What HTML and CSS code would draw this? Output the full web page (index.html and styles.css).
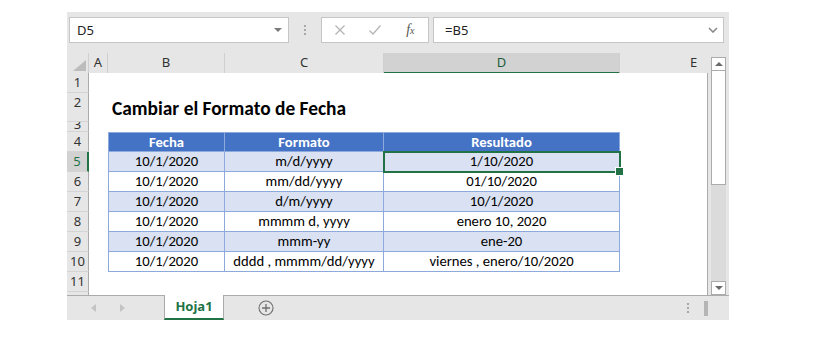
FILE: index.html
```html
<!DOCTYPE html>
<html lang="es">
<head>
  <meta charset="UTF-8">
  <title>Cambiar el Formato de Fecha</title>
  <link rel="stylesheet" href="styles.css">
</head>
<body>

<div class="excel">
  <!-- Formula bar -->
  <div class="formula-bar">
    <div class="name-box"><span>D5</span><span class="caret"></span></div>
    <div class="grip"><span></span><span></span><span></span></div>
    <div class="fx-buttons">
      <span class="fx-btn">
        <svg width="12" height="12" viewBox="0 0 12 12"><path d="M1.5 1.5 L10.5 10.5 M10.5 1.5 L1.5 10.5" stroke="#b4b4b4" stroke-width="1.3" fill="none"/></svg>
      </span>
      <span class="fx-btn">
        <svg width="14" height="12" viewBox="0 0 14 12"><path d="M1.5 6.5 L5 10 L12.5 1.5" stroke="#b4b4b4" stroke-width="1.3" fill="none"/></svg>
      </span>
      <span class="fx-btn fx-text"><i>f</i><sub>x</sub></span>
    </div>
    <div class="formula-input">
      <span>=B5</span>
      <svg width="10" height="6" viewBox="0 0 10 6"><path d="M1 1 L5 5 L9 1" stroke="#8a8a8a" stroke-width="1.6" fill="none"/></svg>
    </div>
  </div>

  <!-- Grid + scrollbar -->
  <div class="main">
    <div class="sheet">
      <div class="row head">
        <div class="corner">
          <svg width="14" height="11" viewBox="0 0 14 11"><polygon points="13,0 13,11 0,11" fill="#bcbcbc"/></svg>
        </div>
        <div class="ch">A</div>
        <div class="ch">B</div>
        <div class="ch">C</div>
        <div class="ch active">D</div>
        <div class="ch">E</div>
      </div>

      <div class="rows">
        <div class="row"><div class="rh">1</div></div>
        <div class="row tall">
          <div class="rh">2</div>
          <div></div>
          <div class="title">Cambiar el Formato de Fecha</div>
        </div>
        <div class="row short"><div class="rh">3</div></div>

        <div class="row">
          <div class="rh">4</div><div></div>
          <div class="cell th first">Fecha</div>
          <div class="cell th">Formato</div>
          <div class="cell th">Resultado</div>
        </div>
        <div class="row band">
          <div class="rh active">5</div><div></div>
          <div class="cell first">10/1/2020</div>
          <div class="cell">m/d/yyyy</div>
          <div class="cell sel">1/10/2020</div>
        </div>
        <div class="row">
          <div class="rh">6</div><div></div>
          <div class="cell first">10/1/2020</div>
          <div class="cell">mm/dd/yyyy</div>
          <div class="cell">01/10/2020</div>
        </div>
        <div class="row band">
          <div class="rh">7</div><div></div>
          <div class="cell first">10/1/2020</div>
          <div class="cell">d/m/yyyy</div>
          <div class="cell">10/1/2020</div>
        </div>
        <div class="row">
          <div class="rh">8</div><div></div>
          <div class="cell first">10/1/2020</div>
          <div class="cell">mmmm d, yyyy</div>
          <div class="cell">enero 10, 2020</div>
        </div>
        <div class="row band">
          <div class="rh">9</div><div></div>
          <div class="cell first">10/1/2020</div>
          <div class="cell">mmm-yy</div>
          <div class="cell">ene-20</div>
        </div>
        <div class="row">
          <div class="rh">10</div><div></div>
          <div class="cell first">10/1/2020</div>
          <div class="cell">dddd , mmmm/dd/yyyy</div>
          <div class="cell">viernes , enero/10/2020</div>
        </div>
        <div class="row"><div class="rh">11</div></div>
        <div class="row"><div class="rh"></div></div>
      </div>
    </div>

    <div class="vscroll">
      <div class="arrow-box"><span class="tri up"></span></div>
      <div class="thumb"></div>
      <div class="track"></div>
      <div class="arrow-box"><span class="tri down"></span></div>
    </div>
  </div>

  <!-- Sheet tabs -->
  <div class="tabs">
    <div class="tab-nav">
      <span class="tri left"></span>
      <span class="tri right"></span>
    </div>
    <div class="tab">Hoja1</div>
    <div class="tab-rest">
      <svg class="add" width="16" height="16" viewBox="0 0 16 16">
        <circle cx="8" cy="8" r="7" stroke="#6f6f6f" stroke-width="1.1" fill="none"/>
        <path d="M8 4 V12 M4 8 H12" stroke="#6f6f6f" stroke-width="1.3"/>
      </svg>
      <div class="hsplit">
        <div class="dots"><span></span><span></span><span></span></div>
        <div class="bar"></div>
      </div>
    </div>
  </div>
</div>

</body>
</html>
```

FILE: styles.css
```css
/* General */
* {
  margin: 0;
  padding: 0;
  box-sizing: border-box;
}

body {
  background-color: #fff;
  font-family: "Noto Sans", "Open Sans", sans-serif;
  color: #222;
}

.excel {
  width: 662px;
  height: 308px;
  margin: 12px 0 0 67px;
  background-color: #e6e6e6;
}

/* Formula bar */
.formula-bar {
  height: 41px;
  display: flex;
  align-items: flex-start;
  padding: 5px 5px 0 2px;
}

.name-box {
  width: 220px;
  height: 26px;
  background-color: #fff;
  border: 1px solid #c6c6c6;
  display: flex;
  align-items: center;
  justify-content: space-between;
  padding: 0 6px 0 7px;
  font-size: 13px;
}

.caret {
  border-left: 4px solid transparent;
  border-right: 4px solid transparent;
  border-top: 4px solid #7a7a7a;
}

.grip {
  width: 32px;
  height: 26px;
  display: flex;
  flex-direction: column;
  align-items: center;
  gap: 2px;
  padding-top: 8px;
}

.grip span {
  width: 2px;
  height: 2px;
  background-color: #a8a8a8;
}

.fx-buttons {
  width: 108px;
  height: 26px;
  background-color: #fff;
  border: 1px solid #c6c6c6;
  display: flex;
  align-items: center;
}

.fx-btn {
  width: 36px;
  display: flex;
  justify-content: center;
  align-items: center;
}

.fx-text {
  font-family: "Liberation Serif", serif;
  font-size: 14px;
  color: #555;
}

.fx-text sub {
  font-size: 10px;
  font-style: italic;
}

.formula-input {
  flex: 1;
  height: 26px;
  margin-left: 4px;
  background-color: #fff;
  border: 1px solid #c6c6c6;
  display: flex;
  align-items: center;
  justify-content: space-between;
  padding: 0 5px 0 11px;
  font-size: 13px;
}

/* Grid */
.main {
  display: grid;
  grid-template-columns: 641px 21px;
  height: 242px;
}

.sheet {
  display: flex;
  flex-direction: column;
  overflow: hidden;
}

.row {
  display: grid;
  grid-template-columns: 22px 19px 117px 159px 236px 148px;
  height: 20px;
  flex-shrink: 0;
}

.row.tall {
  height: 29px;
}

.row.short {
  height: 10px;
}

.rows {
  flex: 1;
  overflow: hidden;
  background-color: #fff;
  border-right: 1px solid #ababab;
}

.head > div {
  background-color: #e6e6e6;
  border-bottom: 1px solid #ababab;
  border-right: 1px solid #cfcfcf;
}

.corner {
  display: flex;
  align-items: flex-end;
  justify-content: flex-end;
  padding: 0 1px 2px 0;
}

.ch {
  font-size: 13px;
  color: #333;
  text-align: center;
  line-height: 19px;
}

.ch.active {
  background-color: #d2d2d2 !important;
  border-bottom: 2px solid #217346 !important;
  color: #1f5c3a;
}

.rh {
  background-color: #e6e6e6;
  border-right: 1px solid #ababab;
  border-bottom: 1px solid #d4d4d4;
  font-size: 13px;
  color: #333;
  text-align: center;
  line-height: 19px;
  overflow: hidden;
}

.short .rh {
  line-height: 4px;
}

.rh.active {
  background-color: #d2d2d2;
  border-right: 2px solid #217346;
  color: #217346;
}

.title {
  grid-column: 3 / 6;
  font-family: "Carlito", "Lato", sans-serif;
  font-weight: bold;
  font-size: 19.4px;
  color: #000;
  padding: 4px 0 0 4px;
  white-space: nowrap;
}

/* Data table */
.cell {
  font-family: "Carlito", "Lato", sans-serif;
  font-size: 14.67px;
  color: #000;
  text-align: center;
  line-height: 19px;
  white-space: nowrap;
  border-right: 1px solid #8ea9db;
  border-bottom: 1px solid #8ea9db;
}

.cell.first {
  border-left: 1px solid #8ea9db;
}

.band .cell {
  background-color: #d9e1f2;
}

.cell.th {
  background-color: #4472c4;
  color: #fff;
  font-weight: bold;
  border-top: 1px solid #8ea9db;
  line-height: 18px;
}

.cell.sel {
  position: relative;
  outline: 2px solid #217346;
  outline-offset: -1px;
  z-index: 1;
}

.cell.sel::after {
  content: "";
  position: absolute;
  right: -5px;
  bottom: -5px;
  width: 7px;
  height: 7px;
  background-color: #217346;
  border: 1px solid #fff;
}

/* Vertical scrollbar */
.vscroll {
  display: flex;
  flex-direction: column;
  padding: 4px 3px 0;
}

.arrow-box {
  height: 14px;
  background-color: #fff;
  border: 1px solid #ababab;
  display: flex;
  align-items: center;
  justify-content: center;
}

.thumb {
  height: 114px;
  background-color: #fff;
  border: 1px solid #ababab;
  border-top: none;
}

.track {
  flex: 1;
  background-color: #dbdbdb;
}

.tri {
  width: 0;
  height: 0;
}

.tri.up {
  border-left: 4px solid transparent;
  border-right: 4px solid transparent;
  border-bottom: 4px solid #6a6a6a;
}

.tri.down {
  border-left: 4px solid transparent;
  border-right: 4px solid transparent;
  border-top: 4px solid #6a6a6a;
}

.tri.left {
  border-top: 4px solid transparent;
  border-bottom: 4px solid transparent;
  border-right: 5px solid #c4c4c4;
}

.tri.right {
  border-top: 4px solid transparent;
  border-bottom: 4px solid transparent;
  border-left: 5px solid #c4c4c4;
}

/* Sheet tabs */
.tabs {
  height: 25px;
  display: flex;
}

.tab-nav {
  width: 97px;
  border-top: 1px solid #ababab;
  display: flex;
  align-items: center;
  gap: 24px;
  padding-left: 24px;
}

.tab {
  width: 60px;
  background-color: #fff;
  border-left: 1px solid #ababab;
  border-right: 1px solid #ababab;
  border-bottom: 2px solid #217346;
  color: #217346;
  font-weight: bold;
  font-size: 13px;
  text-align: center;
  line-height: 22px;
}

.tab-rest {
  flex: 1;
  border-top: 1px solid #ababab;
  display: flex;
  align-items: center;
  padding: 0 21px 0 34px;
}

.hsplit {
  margin-left: auto;
  display: flex;
  align-items: center;
  gap: 15px;
}

.dots {
  display: flex;
  flex-direction: column;
  gap: 2px;
}

.dots span {
  width: 2px;
  height: 2px;
  background-color: #a8a8a8;
}

.bar {
  width: 4px;
  height: 15px;
  background-color: #b5b5b5;
}
```
